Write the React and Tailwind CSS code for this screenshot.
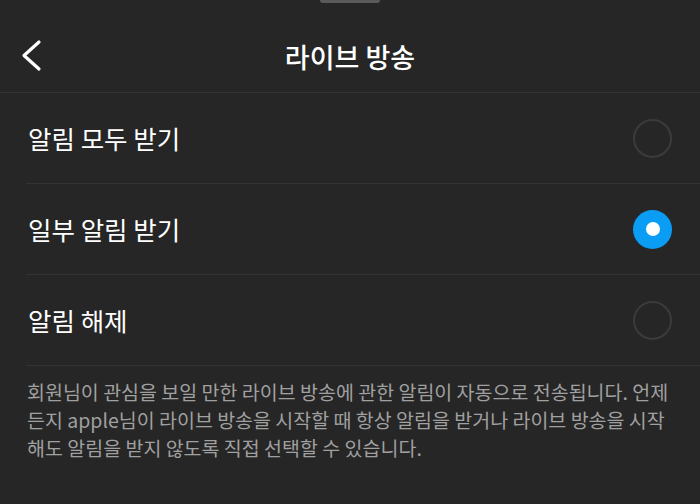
import React, { useState } from "react";

const options = [
  { id: "all", label: "알림 모두 받기" },
  { id: "some", label: "일부 알림 받기" },
  { id: "off", label: "알림 해제" },
];

const Radio = ({ checked }) =>
  checked ? (
    <div className="w-[39px] h-[39px] rounded-full bg-[#0b9cf4] flex items-center justify-center">
      <div className="w-[14px] h-[14px] rounded-full bg-white" />
    </div>
  ) : (
    <div className="w-[39px] h-[39px] rounded-full border-2 border-[#3b3b3b]" />
  );

const App = () => {
  const [selected, setSelected] = useState("some");

  return (
    <div
      className="w-[700px] h-[504px] bg-[#262626] text-white overflow-hidden"
      style={{ fontFamily: '"Noto Sans CJK KR", "Noto Sans", sans-serif' }}
    >
      <div className="h-[93px] border-b border-[#333333] flex flex-col">
        <div className="mx-auto w-[60px] h-[3px] rounded-b bg-[#5a5a5a]" />
        <div className="mt-[24px] h-[58px] grid grid-cols-[60px_1fr_60px] items-center">
          <button className="pl-[21px] flex items-center">
            <svg width="22" height="34" viewBox="0 0 22 34" fill="none">
              <path
                d="M18 3 L3 16.5 L18 30"
                stroke="white"
                strokeWidth="3.2"
                strokeLinecap="round"
                strokeLinejoin="round"
              />
            </svg>
          </button>
          <h1 className="text-center text-[27px] font-medium leading-none">
            라이브 방송
          </h1>
          <div />
        </div>
      </div>

      {options.map((opt) => (
        <div
          key={opt.id}
          className="pl-[26px] cursor-pointer"
          onClick={() => setSelected(opt.id)}
        >
          <div className="h-[91px] border-b border-[#333333] flex items-center justify-between pl-[2px] pr-[28px]">
            <span className="text-[25.5px] leading-none">{opt.label}</span>
            <Radio checked={selected === opt.id} />
          </div>
        </div>
      ))}

      <div className="pt-[12px] px-[27px] text-[19.5px] leading-[28px] text-[#a0a0a0]">
        <p className="whitespace-nowrap">
          회원님이 관심을 보일 만한 라이브 방송에 관한 알림이 자동으로 전송됩니다. 언제
        </p>
        <p className="whitespace-nowrap">
          든지 apple님이 라이브 방송을 시작할 때 항상 알림을 받거나 라이브 방송을 시작
        </p>
        <p className="whitespace-nowrap">해도 알림을 받지 않도록 직접 선택할 수 있습니다.</p>
      </div>
    </div>
  );
};

export default App;
